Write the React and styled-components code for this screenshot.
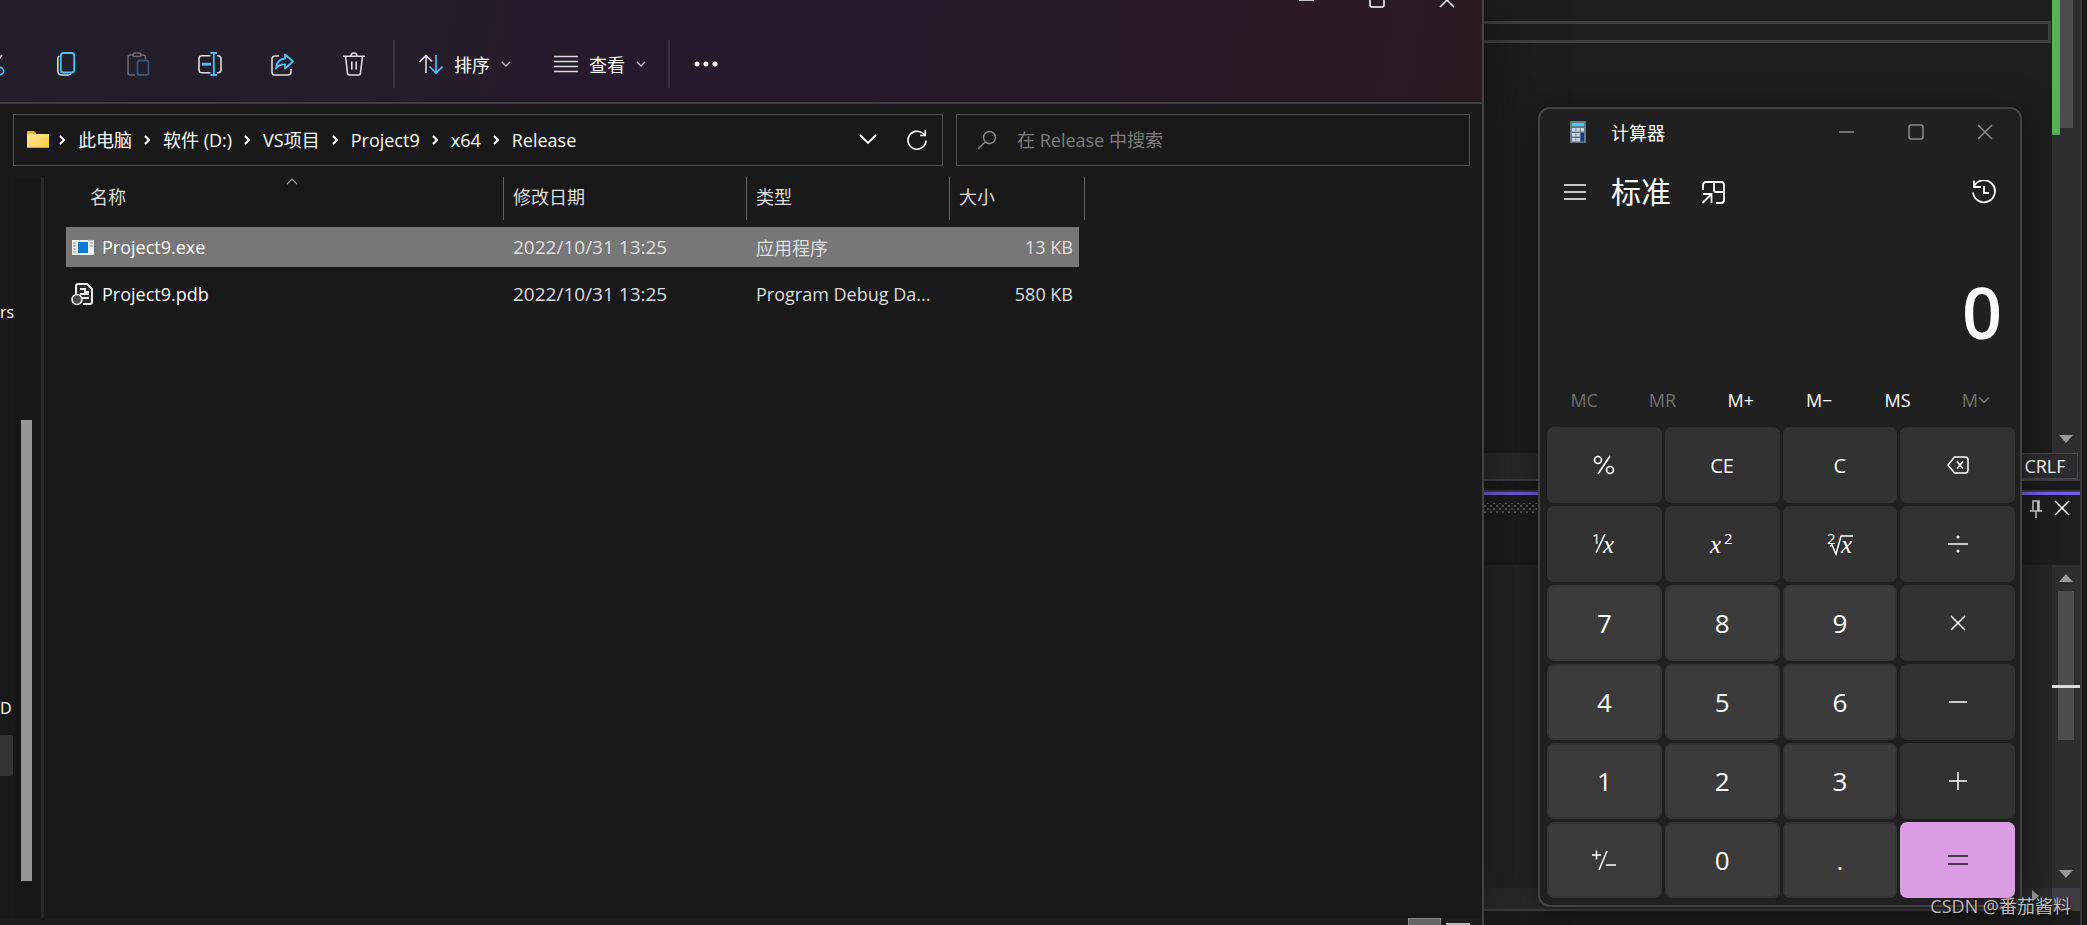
import React, { useState } from 'react'
import styled, { createGlobalStyle } from 'styled-components'

const EstiloGlobal = createGlobalStyle`
    * { box-sizing: border-box; }
    body {
        margin: 0;
        background-color: #1b1b1b;
        font-family: "Open Sans", "Noto Sans CJK SC", sans-serif;
        font-size: 18px;
        color: #ffffff;
    }
    button, input {
        font: inherit;
        color: inherit;
        border: none;
        background: none;
        padding: 0;
        margin: 0;
    }
    svg { display: block; flex: none; }
`

const Desktop = styled.div`
    position: relative;
    height: 100vh;
    min-height: 900px;
    overflow: hidden;
`

/* ---------- editor behind the windows ---------- */

const Ide = styled.div`
    display: grid;
    grid-template-rows: minmax(0, 453fr) 28px 9px minmax(0, 421fr) 14px;
    height: 100%;
    margin-right: 5px;
    border-right: 2px solid #3a3a3a;
    background-color: #1b1b1b;
`

const EditorArea = styled.div`
    display: flex;
    background-color: #1e1e1e;
`

const EditorText = styled.div`
    flex: 1;
`

const CurrentLine = styled.div`
    height: 22px;
    margin: 21px 1px 0 0;
    border: 3px solid #404040;
`

const ScrollColumn = styled.div`
    position: relative;
    width: 28px;
    background-color: #2e2e2e;
    display: flex;
    flex-direction: column;
    align-items: center;
    justify-content: space-between;
    padding: 9px 0 10px;
`

const ChangeMark = styled.div`
    position: absolute;
    left: 0;
    top: 0;
    width: 8px;
    height: 135px;
    background-color: #57b257;
`

const EditorThumb = styled.div`
    position: absolute;
    left: 8px;
    top: 0;
    width: 13px;
    height: 128px;
    background-color: #4d4d4d;
`

const Triangle = styled.span`
    width: 0;
    height: 0;
    border: 7px solid transparent;
    border-top: ${props => props.$up ? 'none' : '8px solid #999999'};
    border-bottom: ${props => props.$up ? '8px solid #999999' : 'none'};
`

const IdeStatus = styled.div`
    display: flex;
    justify-content: flex-end;
    background-color: #2b2b2b;
    border-bottom: 2px solid #404040;
`

const LineEnding = styled.button`
    width: 66px;
    margin-right: 2px;
    border: 1px solid #464646;
    background-color: #2b2b2e;
    line-height: 24px;
    font-size: 18px;
`

const Panel = styled.div`
    display: flex;
    flex-direction: column;
    border-top: 2px solid #3a3a3a;
    border-bottom: 2px solid #404040;
`

const PanelHeader = styled.div`
    display: flex;
    align-items: flex-start;
    gap: 12px;
    height: 73px;
    padding: 5px 10px 0 0;
    border-top: 3px solid #7160e8;
    background-color: #1e1e1e;
`

const Grip = styled.div`
    flex: 1;
    height: 10px;
    margin-top: 3px;
    background-image:
        radial-gradient(circle, #5c5c5c 1px, transparent 1px),
        radial-gradient(circle, #5c5c5c 1px, transparent 1px);
    background-size: 6px 6px;
    background-position: 0 0, 3px 3px;
`

const PanelBody = styled.div`
    flex: 1;
    display: flex;
    background-color: #252525;
`

const PanelText = styled.div`
    flex: 1;
`

const PanelThumb = styled.div`
    position: absolute;
    left: 6px;
    top: 26px;
    width: 16px;
    height: 149px;
    background-color: #4d4d4d;
`

const CaretMark = styled.div`
    position: absolute;
    left: 0;
    top: 120px;
    width: 28px;
    height: 3px;
    background-color: #dcdcdc;
`

const PanelScroll = styled.div`
    display: flex;
    justify-content: flex-end;
    height: 21px;
    background-color: #2b2b2b;
`

const ScrollCorner = styled.div`
    width: 28px;
    margin-left: 12px;
    background-color: #3e3e42;
`

/* ---------- file explorer ---------- */

const Explorer = styled.section`
    position: absolute;
    left: 0;
    top: 0;
    bottom: 0;
    width: calc(100% - 603px);
    display: flex;
    flex-direction: column;
    border-right: 2px solid #434343;
    background-color: #191919;
    box-shadow: 0 0 60px rgba(0, 0, 0, 0.5);
`

const ExplorerTop = styled.header`
    height: 104px;
    overflow: hidden;
    border-bottom: 2px solid #3d3d3d;
    background: linear-gradient(100deg, #221f29 0%, #231e2a 25%, #27192d 42%, #281a2b 65%, #2b1a25 88%, #2a1b20 100%);
`

const ExplorerCaption = styled.div`
    display: flex;
    justify-content: flex-end;
    height: 26px;
    overflow: hidden;
`

const CaptionButton = styled.button`
    display: flex;
    align-items: center;
    justify-content: center;
    width: ${props => props.$wide ? '70px' : '69px'};
    height: ${props => props.$wide ? '16px' : '46px'};
    margin-top: ${props => props.$wide ? '-8px' : '0'};
    color: ${props => props.$wide ? '#ffffff' : '#8c8c8c'};
`

const Toolbar = styled.div`
    display: flex;
    align-items: center;
    height: 76px;
    margin-left: -42px;
`

const ToolButton = styled.button`
    display: flex;
    align-items: center;
    justify-content: center;
    width: 72px;
    height: 48px;
`

const MenuButton = styled.button`
    display: flex;
    align-items: center;
    gap: 11px;
    height: 48px;
    padding: 0 19px 0 24px;
`

const ToolDivider = styled.div`
    width: 2px;
    height: 48px;
    margin-left: 3px;
    background-color: #3c3142;
`

const AddressRow = styled.div`
    display: grid;
    grid-template-columns: 930fr 514fr;
    gap: 13px;
    padding: 10px 12px 4px 13px;
`

const AddressBar = styled.nav`
    display: flex;
    align-items: center;
    height: 52px;
    padding: 0 14px 0 12px;
    border: 1px solid #535353;
`

const Crumb = styled.a`
    color: #ffffff;
    text-decoration: none;
    line-height: 24px;
    margin: 0 12px 0 13px;
    white-space: nowrap;
`

const AddressTools = styled.div`
    display: flex;
    gap: 28px;
    margin-left: auto;
`

const SearchBox = styled.label`
    display: flex;
    align-items: center;
    gap: 20px;
    height: 52px;
    padding: 0 20px;
    border: 1px solid #535353;
`

const SearchInput = styled.input`
    flex: 1;
    min-width: 0;
    outline: none;
    &::placeholder { color: #7d7d7d; opacity: 1; }
`

const ExplorerBody = styled.div`
    flex: 1;
    display: flex;
    min-height: 0;
`

const Sidebar = styled.aside`
    display: flex;
    width: 44px;
    margin-top: 7px;
    border-right: 3px solid #262626;
`

const SideTree = styled.div`
    width: 14px;
    overflow: hidden;
    display: flex;
    flex-direction: column;
    padding-top: 123px;
    font-size: 16px;
    line-height: 24px;
`

const SideItem = styled.span`
    margin-bottom: ${props => props.$last ? '15px' : '372px'};
`

const SideSelected = styled.div`
    width: 13px;
    height: 41px;
    border-radius: 0 2px 2px 0;
    background-color: #333333;
`

const SideTrack = styled.div`
    flex: 1;
    padding: 243px 7px 0;
    background-color: #171717;
`

const SideThumb = styled.div`
    width: 11px;
    height: 461px;
    background-color: #969696;
`

const Files = styled.table`
    width: 1019px;
    margin-left: 22px;
    table-layout: fixed;
    border-collapse: separate;
    border-spacing: 0 7px;
    align-self: flex-start;
`

const HeadCell = styled.th`
    position: relative;
    height: 43px;
    padding: 0 0 5px ${props => props.$first ? '24px' : '9px'};
    border-right: 1px solid #636363;
    text-align: left;
    font-weight: 400;
    color: #dedede;
`

const SortMark = styled.span`
    position: absolute;
    left: 220px;
    top: 1px;
`

const FileRow = styled.tr`
    background-color: ${props => props.$selected ? '#777777' : 'transparent'};
    cursor: default;
`

const FileCell = styled.td`
    height: 40px;
    padding: 0 ${props => props.$right ? '6px' : '0'} 0 9px;
    text-align: ${props => props.$right ? 'right' : 'left'};
    font-size: ${props => props.$date ? '19px' : '18px'};
    color: #dedede;
    white-space: nowrap;
`

const NameCell = styled.td`
    padding-left: 5px;
`

const FileName = styled.div`
    display: flex;
    align-items: center;
    gap: 7px;
`

const ExplorerStatus = styled.footer`
    display: flex;
    justify-content: flex-end;
    align-items: flex-end;
    gap: 5px;
    height: 7px;
    padding-right: 12px;
    background-color: #1c1c1c;
`

const ViewToggle = styled.button`
    width: ${props => props.$active ? '33px' : '24px'};
    height: ${props => props.$active ? '7px' : '2px'};
    border: ${props => props.$active ? '1px solid #858585' : 'none'};
    border-bottom: none;
    background-color: ${props => props.$active ? '#666666' : '#b8b8b8'};
`

/* ---------- calculator ---------- */

const Calculator = styled.section`
    position: absolute;
    top: 107px;
    right: 65px;
    width: 484px;
    display: flex;
    flex-direction: column;
    border: 2px solid #434343;
    border-radius: 12px;
    background-color: #202020;
    box-shadow: 0 4px 36px rgba(0, 0, 0, 0.45);
`

const CalcTitle = styled.header`
    display: flex;
    align-items: center;
    height: 46px;
    padding: 0 1px 0 30px;
`

const CalcName = styled.span`
    flex: 1;
    margin-left: 25px;
`

const CalcHeader = styled.div`
    display: flex;
    align-items: center;
    height: 74px;
    padding: 0 24px;
`

const Mode = styled.h1`
    margin: 0 30px 0 25px;
    font-size: 30px;
    font-weight: 400;
    line-height: 40px;
`

const IconButton = styled.button`
    display: flex;
    margin-left: ${props => props.$end ? 'auto' : '0'};
`

const Display = styled.output`
    height: 147px;
    padding: 35px 18px 0;
    font-size: 70px;
    font-weight: 600;
    line-height: 96px;
    text-align: right;
`

const MemoryRow = styled.div`
    display: grid;
    grid-template-columns: repeat(6, 1fr);
    height: 48px;
    margin: 0 5px 3px;
`

const MemoryButton = styled.button`
    display: flex;
    align-items: center;
    justify-content: center;
    &:disabled { color: #6f6f6f; }
`

const Keypad = styled.div`
    display: grid;
    grid-template-columns: repeat(4, 1fr);
    grid-auto-rows: 76px;
    gap: 3px;
    padding: 0 5px 7px 7px;
`

const fundoDaTecla = { op: '#323232', num: '#3b3b3b', eq: '#da9de3' }

const Key = styled.button`
    display: flex;
    align-items: center;
    justify-content: center;
    border: 2px solid ${props => props.$kind === 'num' ? '#343434' : fundoDaTecla[props.$kind]};
    border-radius: 7px;
    background-color: ${props => fundoDaTecla[props.$kind]};
    color: ${props => props.$kind === 'eq' ? '#1a1a1a' : '#ffffff'};
    font-size: ${props => props.$kind === 'num' ? '26px' : '20px'};
`

const Watermark = styled.div`
    position: absolute;
    right: 16px;
    bottom: 6px;
    line-height: 26px;
    color: #bdbdbd;
    text-shadow: 1px 1px 2px #000000;
`

/* ---------- icons ---------- */

const Svg = ({ w = 24, h = 24, children, ...rest }) => (
    <svg width={w} height={h} viewBox={`0 0 ${w} ${h}`} fill="none" stroke="currentColor" strokeWidth="1.6" aria-hidden="true" {...rest}>
        {children}
    </svg>
)

const azul = '#4cc2ff'
const claro = '#dcdcdc'

const CutIcon = () => (
    <Svg stroke={claro}>
        <path d="M5 2l10 14M20 3L10 16" />
        <circle cx="7" cy="19" r="3.6" stroke={azul} />
        <circle cx="18" cy="19" r="3.6" stroke={azul} />
    </Svg>
)

const CopyIcon = () => (
    <Svg stroke={claro}>
        <path d="M5.500 4C4 4.500 3.800 5.500 3.800 7v12a4 4 0 0 0 4 4H14c1.500 0 2.500-.300 3-1.500" />
        <rect x="6.800" y="1" width="13.400" height="19.500" rx="2.500" stroke={azul} strokeWidth="1.800" />
    </Svg>
)

const PasteIcon = () => (
    <Svg stroke="#6d6872">
        <path d="M7 3H4a2 2 0 0 0-2 2v16a2 2 0 0 0 2 2h5M15 3h2.500a2 2 0 0 1 2 2v2" />
        <rect x="7" y="1" width="8" height="3.500" rx="1.700" />
        <rect x="11.500" y="8.500" width="11" height="14.500" rx="2" stroke="#31597a" strokeWidth="1.800" />
    </Svg>
)

const RenameIcon = () => (
    <Svg stroke={claro}>
        <path d="M12.500 3.800H4a3 3 0 0 0-3 3v11a3 3 0 0 0 3 3h8.500M19 3.800h1a3 3 0 0 1 3 3v11a3 3 0 0 1-3 3h-1" />
        <path d="M15.800 1v22M12.500 1H19M12.500 23H19" stroke={azul} strokeWidth="1.800" />
        <path d="M4 12.200h9" stroke={azul} strokeWidth="2.800" />
    </Svg>
)

const ShareIcon = () => (
    <Svg stroke={claro}>
        <path d="M9 4H5a3 3 0 0 0-3 3v13a3 3 0 0 0 3 3h13a3 3 0 0 0 3-3v-3" />
        <path d="M15 2.500l8 7-8 7v-4c-4-.300-7 1-9 4 .500-6 4-9.500 9-10z" stroke={azul} strokeLinejoin="round" strokeWidth="1.800" />
    </Svg>
)

const TrashIcon = () => (
    <Svg stroke={claro}>
        <path d="M1 4.200h22M3.500 4.500l2 16.500a2 2 0 0 0 2 2h9a2 2 0 0 0 2-2l2-16.500M9 4a3 3 0 0 1 6 0M9.800 9.500v8M14.200 9.500v8" />
    </Svg>
)

const SortIcon = () => (
    <Svg stroke={claro}>
        <path d="M7 21V3.500M.500 10L7 3.500l6 6" />
        <path d="M17 3v17.500M10.500 14.500l6.500 6.500 6.500-6.500" stroke={azul} />
    </Svg>
)

const ListIcon = () => (
    <Svg stroke={claro}>
        <path d="M0 4.500h24M0 9.500h24M0 14.500h24M0 19.500h24" />
    </Svg>
)

const Chevron = ({ size = 10, color = '#bdb8c0' }) => (
    <Svg w={10} h={10} width={size} height={size} viewBox="0 0 10 10" stroke={color} strokeWidth={size > 12 ? 0.9 : 1.4}>
        <path d="M1 3l4 4 4-4" />
    </Svg>
)

const CrumbArrow = () => (
    <Svg w={6} h={10} strokeWidth="2">
        <path d="M1 1l4 4-4 4" />
    </Svg>
)

const FolderIcon = () => (
    <Svg w={24} h={20} stroke="none">
        <path d="M1 2a1 1 0 0 1 1-1h6l2 2v4H1z" fill="#ffb01f" />
        <path d="M1 4h22v14H1z" fill="url(#pasta)" />
        <path d="M1 17h22v1H1z" fill="#e8a72a" />
        <defs>
            <linearGradient id="pasta" x1="0" y1="0" x2="1" y2="1">
                <stop stopColor="#ffe59c" />
                <stop offset="1" stopColor="#ffcb3f" />
            </linearGradient>
        </defs>
    </Svg>
)

const ExeIcon = () => (
    <Svg w={24} h={16} stroke="none">
        <path d="M1 1h22v15H1z" fill="#f4f4f4" />
        <path d="M7 3h10v11H7z" fill="#0c7cd5" />
        <path d="M2 4h3M2 7h3M2 10h3M2 13h3M19 4h3M19 7h3M17 1h5" stroke="#8a8a8a" strokeWidth="1" />
    </Svg>
)

const PdbIcon = () => (
    <Svg stroke="#eeeeee" strokeWidth="2">
        <path d="M5 14V4a2 2 0 0 1 2-2h9l5 5v13a2 2 0 0 1-2 2h-7" fill="#2a2a2a" />
        <path d="M9 7h5v3h4M9 12h9M11 16h7" />
        <circle cx="6" cy="17.500" r="5" fill="#4a4a4a" strokeWidth="1.600" />
    </Svg>
)

const RefreshIcon = () => (
    <Svg w={22} h={22}>
        <path d="M20 11.500a9 9 0 1 1-3-7l2 1.800M19.300 1v5.500H14" />
    </Svg>
)

const SearchIcon = () => (
    <Svg w={20} h={20} stroke="#8a8a8a" strokeWidth="1.400">
        <circle cx="12.500" cy="7.500" r="6" />
        <path d="M8 12l-7 7" />
    </Svg>
)

const MinIcon = () => <Svg w={16} h={16} strokeWidth="1.500"><path d="M0 8h15" /></Svg>
const MaxIcon = () => <Svg w={16} h={16} strokeWidth="1.500"><rect x="1" y="1" width="14" height="14" rx="2" /></Svg>
const CloseIcon = () => <Svg w={16} h={16} strokeWidth="1.500"><path d="M1 1l14 14M15 1L1 15" /></Svg>

const CalcIcon = () => (
    <Svg w={16} h={22} stroke="none">
        <rect width="16" height="22" rx="1" fill="#66788a" />
        <path d="M2 2h12v3H2z" fill="#3fd0f7" />
        <path d="M2 7h3.500v3.500H2zM6.300 7h3.500v3.500H6.300zM10.600 7H14v3.500h-3.400zM2 12h3.500v3.500H2zM6.300 12h3.500v3.500H6.300zM2 17h3.500v3.500H2zM6.300 17h3.500v3.500H6.300z" fill="#cdd6dd" />
        <path d="M10.800 12H14v8.500h-3.200z" fill="#103f8c" />
    </Svg>
)

const HamburgerIcon = () => <Svg w={22} h={18} strokeWidth="1.500"><path d="M0 2h22M0 9h22M0 16h22" /></Svg>

const KeepOnTopIcon = () => (
    <Svg strokeWidth="1.800">
        <path d="M2 10V5a3 3 0 0 1 3-3h15a3 3 0 0 1 3 3v15a3 3 0 0 1-3 3h-5M13 2v8a2 2 0 0 0 2 2h8" />
        <path d="M1.500 23L10 14.500M2 14h8.500v9" />
    </Svg>
)

const HistoryIcon = () => (
    <Svg strokeWidth="1.800">
        <path d="M2 6.500a11 11 0 1 1-1 6M2 .500V7h7M12 6v7h5" />
    </Svg>
)

const BackspaceIcon = () => (
    <Svg w={22} h={18} strokeWidth="1.500">
        <path d="M7.500 1H18a3 3 0 0 1 3 3v10a3 3 0 0 1-3 3H7.500L1 9zM10 5.500l6 7M16 5.500l-6 7" strokeLinejoin="round" />
    </Svg>
)

const MathSvg = ({ children }) => (
    <Svg w={34} h={42} viewBox="-4 -8 34 42" stroke="none" fill="currentColor">
        {children}
    </Svg>
)

const Fraction = () => (
    <MathSvg>
        <text x="1" y="13" fontSize="15">1</text>
        <text x="12" y="22" fontSize="25" fontFamily="Liberation Serif" fontStyle="italic">x</text>
        <path d="M5 22L14 3" stroke="currentColor" strokeWidth="1.500" />
    </MathSvg>
)

const Square = () => (
    <MathSvg>
        <text x="1" y="22" fontSize="25" fontFamily="Liberation Serif" fontStyle="italic">x</text>
        <text x="15" y="13" fontSize="15">2</text>
    </MathSvg>
)

const Root = () => (
    <MathSvg>
        <text x="0" y="13" fontSize="15">2</text>
        <text x="14" y="22" fontSize="25" fontFamily="Liberation Serif" fontStyle="italic">x</text>
        <path d="M3 15l2-1 4 9 5-18h12" stroke="currentColor" strokeWidth="1.500" fill="none" />
    </MathSvg>
)

const Percent = () => (
    <Svg w={22} h={22} strokeWidth="1.700">
        <circle cx="5" cy="6" r="3.500" />
        <circle cx="17" cy="16" r="3.500" />
        <path d="M17 2L5 20" />
    </Svg>
)

const Divide = () => (
    <Svg w={22} h={22} strokeWidth="1.500">
        <path d="M1 11h20" />
        <circle cx="11" cy="4" r="1.500" fill="currentColor" stroke="none" />
        <circle cx="11" cy="18" r="1.500" fill="currentColor" stroke="none" />
    </Svg>
)

const Times = () => <Svg w={22} h={22} strokeWidth="1.500"><path d="M4 4l14 14M18 4L4 18" /></Svg>
const Minus = () => <Svg w={22} h={22} strokeWidth="1.500"><path d="M2 11h18" /></Svg>
const Plus = () => <Svg w={22} h={22} strokeWidth="1.500"><path d="M2 11h18M11 2v18" /></Svg>
const Equals = () => <Svg w={22} h={22} strokeWidth="1.500"><path d="M1 7h20M1 15h20" /></Svg>

const PlusMinus = () => (
    <Svg w={26} h={26} strokeWidth="1.500">
        <path d="M1 8h9M5.500 3.500v9M8 23l8-19M15 18h10" />
    </Svg>
)

const PinIcon = () => (
    <Svg w={12} h={18} stroke="#d0d0d0" strokeWidth="1.500">
        <path d="M3 1h6v10H3zM0 11h12M6 11v7" />
        <path d="M8 1v10" strokeWidth="2" />
    </Svg>
)

/* ---------- data ---------- */

const caminho = ['此电脑', '软件 (D:)', 'VS项目', 'Project9', 'x64', 'Release']

const arquivos = [
    { nome: 'Project9.exe', data: '2022/10/31 13:25', tipo: '应用程序', tamanho: '13 KB', icone: <ExeIcon /> },
    { nome: 'Project9.pdb', data: '2022/10/31 13:25', tipo: 'Program Debug Da...', tamanho: '580 KB', icone: <PdbIcon /> },
]

const ferramentas = [
    { nome: '剪切', icone: <CutIcon /> },
    { nome: '复制', icone: <CopyIcon /> },
    { nome: '粘贴', icone: <PasteIcon />, inativo: true },
    { nome: '重命名', icone: <RenameIcon /> },
    { nome: '共享', icone: <ShareIcon /> },
    { nome: '删除', icone: <TrashIcon /> },
]

const memoria = [
    { nome: 'MC', inativo: true },
    { nome: 'MR', inativo: true },
    { nome: 'M+' },
    { nome: 'M−' },
    { nome: 'MS' },
    { nome: 'M', inativo: true, menu: true },
]

const teclas = [
    ['%', 'op', <Percent />], ['CE', 'op'], ['C', 'op'], ['⌫', 'op', <BackspaceIcon />],
    ['1/x', 'op', <Fraction />], ['x²', 'op', <Square />], ['√x', 'op', <Root />], ['÷', 'op', <Divide />],
    ['7', 'num'], ['8', 'num'], ['9', 'num'], ['×', 'op', <Times />],
    ['4', 'num'], ['5', 'num'], ['6', 'num'], ['−', 'op', <Minus />],
    ['1', 'num'], ['2', 'num'], ['3', 'num'], ['+', 'op', <Plus />],
    ['±', 'num', <PlusMinus />], ['0', 'num'], ['.', 'num'], ['=', 'eq', <Equals />],
]

function Editor() {
    return (
        <Ide>
            <EditorArea>
                <EditorText>
                    <CurrentLine />
                </EditorText>
                <ScrollColumn>
                    <ChangeMark />
                    <EditorThumb />
                    <span />
                    <Triangle />
                </ScrollColumn>
            </EditorArea>
            <IdeStatus>
                <LineEnding>CRLF</LineEnding>
            </IdeStatus>
            <div />
            <Panel>
                <PanelHeader>
                    <Grip />
                    <IconButton aria-label="固定"><PinIcon /></IconButton>
                    <IconButton aria-label="关闭面板"><CloseIcon /></IconButton>
                </PanelHeader>
                <PanelBody>
                    <PanelText />
                    <ScrollColumn>
                        <Triangle $up />
                        <PanelThumb />
                        <CaretMark />
                        <Triangle />
                    </ScrollColumn>
                </PanelBody>
                <PanelScroll>
                    <Svg w={8} h={14} stroke="none" fill="#999999"><path d="M0 2l7 6-7 6z" /></Svg>
                    <ScrollCorner />
                </PanelScroll>
            </Panel>
        </Ide>
    )
}

function FileExplorer() {
    const [selecionado, setSelecionado] = useState('Project9.exe')

    return (
        <Explorer>
            <ExplorerTop>
                <ExplorerCaption>
                    <CaptionButton $wide aria-label="最小化"><MinIcon /></CaptionButton>
                    <CaptionButton $wide aria-label="最大化"><MaxIcon /></CaptionButton>
                    <CaptionButton $wide aria-label="关闭"><CloseIcon /></CaptionButton>
                </ExplorerCaption>
                <Toolbar>
                    {ferramentas.map((item) => (
                        <ToolButton key={item.nome} aria-label={item.nome} disabled={item.inativo}>{item.icone}</ToolButton>
                    ))}
                    <ToolDivider />
                    <MenuButton><SortIcon />排序<Chevron /></MenuButton>
                    <MenuButton><ListIcon />查看<Chevron /></MenuButton>
                    <ToolDivider />
                    <ToolButton aria-label="更多">
                        <Svg stroke="none" fill="#ffffff">
                            <circle cx="3" cy="12" r="2.500" />
                            <circle cx="12" cy="12" r="2.500" />
                            <circle cx="21" cy="12" r="2.500" />
                        </Svg>
                    </ToolButton>
                </Toolbar>
            </ExplorerTop>
            <AddressRow>
                <AddressBar>
                    <FolderIcon />
                    <Svg w={9} h={10} stroke="none" />
                    {caminho.map((parte) => (
                        <React.Fragment key={parte}>
                            <CrumbArrow />
                            <Crumb href="#">{parte}</Crumb>
                        </React.Fragment>
                    ))}
                    <AddressTools>
                        <IconButton aria-label="历史记录"><Chevron size={20} color="#ffffff" /></IconButton>
                        <IconButton aria-label="刷新"><RefreshIcon /></IconButton>
                    </AddressTools>
                </AddressBar>
                <SearchBox>
                    <SearchIcon />
                    <SearchInput placeholder="在 Release 中搜索" aria-label="搜索" />
                </SearchBox>
            </AddressRow>
            <ExplorerBody>
                <Sidebar>
                    <SideTree>
                        <SideItem>rs</SideItem>
                        <SideItem $last>D</SideItem>
                        <SideSelected />
                    </SideTree>
                    <SideTrack><SideThumb /></SideTrack>
                </Sidebar>
                <Files>
                    <colgroup>
                        <col width="438" />
                        <col width="243" />
                        <col width="203" />
                        <col width="129" />
                        <col width="6" />
                    </colgroup>
                    <thead>
                        <tr>
                            <HeadCell $first>
                                名称
                                <SortMark>
                                    <Svg w={12} h={7} stroke="#a0a0a0" strokeWidth="1.200"><path d="M1 6l5-5 5 5" /></Svg>
                                </SortMark>
                            </HeadCell>
                            <HeadCell>修改日期</HeadCell>
                            <HeadCell>类型</HeadCell>
                            <HeadCell colSpan="2">大小</HeadCell>
                        </tr>
                    </thead>
                    <tbody>
                        {arquivos.map((arquivo) => (
                            <FileRow key={arquivo.nome} $selected={arquivo.nome === selecionado} onClick={() => setSelecionado(arquivo.nome)}>
                                <NameCell><FileName>{arquivo.icone}{arquivo.nome}</FileName></NameCell>
                                <FileCell $date>{arquivo.data}</FileCell>
                                <FileCell>{arquivo.tipo}</FileCell>
                                <FileCell $right>{arquivo.tamanho}</FileCell>
                            </FileRow>
                        ))}
                    </tbody>
                </Files>
            </ExplorerBody>
            <ExplorerStatus>
                <ViewToggle $active aria-label="详细信息" />
                <ViewToggle aria-label="大缩略图" />
            </ExplorerStatus>
        </Explorer>
    )
}

function Calculadora() {
    const [valor, setValor] = useState('0')

    const apertar = (tecla, tipo) => {
        if (tipo === 'num' && tecla !== '±') {
            setValor(valor === '0' && tecla !== '.' ? tecla : valor + tecla)
        }
        if (tecla === 'C' || tecla === 'CE') {
            setValor('0')
        }
    }

    return (
        <Calculator>
            <CalcTitle>
                <CalcIcon />
                <CalcName>计算器</CalcName>
                <CaptionButton aria-label="最小化"><MinIcon /></CaptionButton>
                <CaptionButton aria-label="最大化"><MaxIcon /></CaptionButton>
                <CaptionButton aria-label="关闭"><CloseIcon /></CaptionButton>
            </CalcTitle>
            <CalcHeader>
                <IconButton aria-label="打开导航"><HamburgerIcon /></IconButton>
                <Mode>标准</Mode>
                <IconButton aria-label="置顶"><KeepOnTopIcon /></IconButton>
                <IconButton $end aria-label="历史记录"><HistoryIcon /></IconButton>
            </CalcHeader>
            <Display>{valor}</Display>
            <MemoryRow>
                {memoria.map((item) => (
                    <MemoryButton key={item.nome} disabled={item.inativo}>
                        {item.nome}
                        {item.menu && <Chevron size={12} color="#6f6f6f" />}
                    </MemoryButton>
                ))}
            </MemoryRow>
            <Keypad>
                {teclas.map(([nome, tipo, desenho]) => (
                    <Key key={nome} $kind={tipo} aria-label={nome} onClick={() => apertar(nome, tipo)}>
                        {desenho || nome}
                    </Key>
                ))}
            </Keypad>
        </Calculator>
    )
}

function App() {
    return (
        <Desktop>
            <EstiloGlobal />
            <Editor />
            <FileExplorer />
            <Calculadora />
            <Watermark>CSDN @番茄酱料</Watermark>
        </Desktop>
    )
}

export default App
